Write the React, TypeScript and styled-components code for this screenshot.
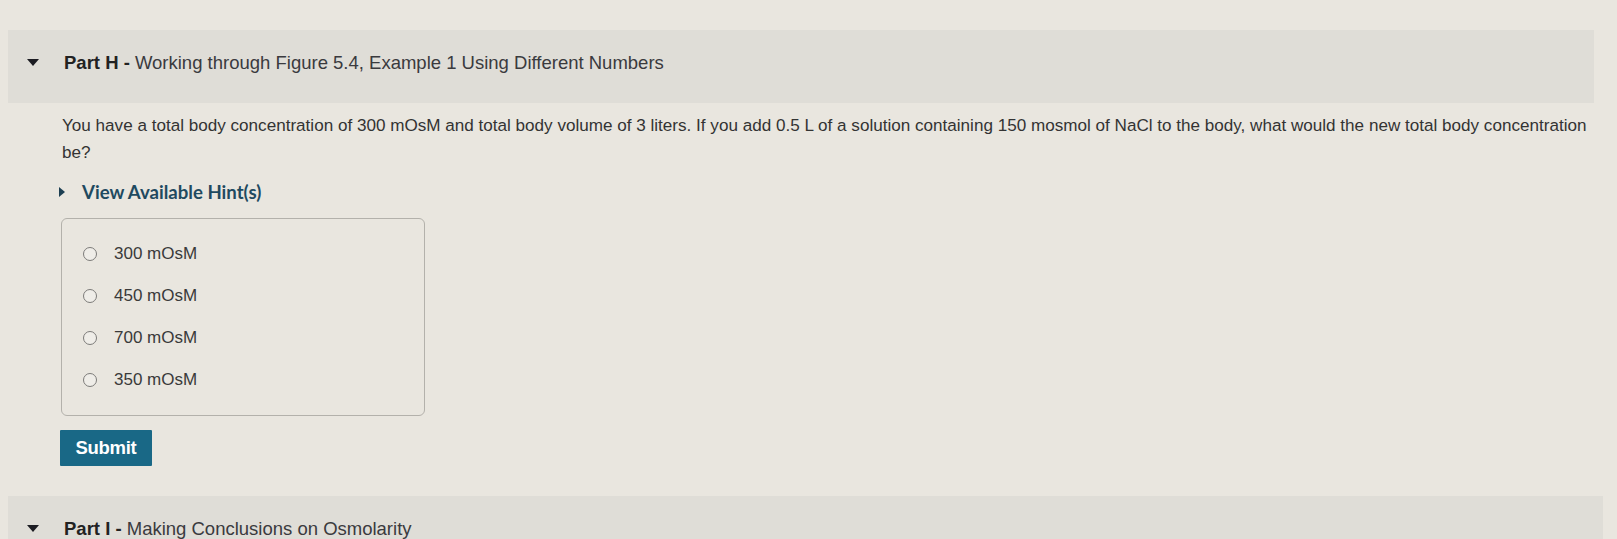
import { createGlobalStyle, styled } from 'styled-components';

const GlobalStyle = createGlobalStyle`
  html, body {
    margin: 0;
    padding: 0;
    background: #e9e6df;
  }
  body {
    font-family: 'Liberation Sans', Arial, sans-serif;
    color: #333;
  }
`;

const OPTIONS = ['300 mOsM', '450 mOsM', '700 mOsM', '350 mOsM'];

const App = () => {
  return (
    <>
      <GlobalStyle />
      <Page>
        <PartHeader>
          <DownCaret />
          <PartTitle>
            <b>Part H - </b>Working through Figure 5.4, Example 1 Using Different Numbers
          </PartTitle>
        </PartHeader>
        <PartBody>
          <Question>
            You have a total body concentration of 300 mOsM and total body volume of 3 liters. If you add 0.5 L of a
            solution containing 150 mosmol of NaCl to the body, what would the new total body concentration be?
          </Question>
          <HintToggle>
            <RightCaret />
            <HintText>View Available Hint(s)</HintText>
          </HintToggle>
          <OptionBox>
            {OPTIONS.map((option) => (
              <OptionRow key={option}>
                <Radio />
                <OptionLabel>{option}</OptionLabel>
              </OptionRow>
            ))}
          </OptionBox>
          <SubmitButton>Submit</SubmitButton>
        </PartBody>
        <PartHeader $next>
          <DownCaret />
          <PartTitle>
            <b>Part I - </b>Making Conclusions on Osmolarity
          </PartTitle>
        </PartHeader>
      </Page>
    </>
  );
};

export default App;

const Page = styled.div`
  display: flex;
  flex-direction: column;
  padding: 30px 23px 0 8px;
  height: 539px;
  box-sizing: border-box;
  overflow: hidden;
`;

const PartHeader = styled.div<{ $next?: boolean }>`
  display: flex;
  align-items: center;
  flex-shrink: 0;
  height: 73px;
  padding: 0 0 8px 19px;
  box-sizing: border-box;
  background: #dfddd7;
  margin-top: ${(p) => (p.$next ? '30px' : '0')};
  margin-right: ${(p) => (p.$next ? '-9px' : '0')};
`;

const DownCaret = styled.span`
  width: 0;
  height: 0;
  border-left: 6px solid transparent;
  border-right: 6px solid transparent;
  border-top: 7px solid #1c1c22;
  margin-right: 25px;
`;

const PartTitle = styled.div`
  font-size: 18.5px;
  color: #3a3a3e;
  b {
    color: #222;
  }
`;

const PartBody = styled.div`
  display: flex;
  flex-direction: column;
  align-items: flex-start;
  padding-left: 53px;
  padding-right: 6px;
`;

const Question = styled.p`
  margin: 9px 0 0 1px;
  font-size: 17.1px;
  line-height: 27px;
  color: #333;
`;

const HintToggle = styled.div`
  display: flex;
  align-items: center;
  margin: 13px 0 0 -2px;
  height: 26px;
`;

const RightCaret = styled.span`
  width: 0;
  height: 0;
  border-top: 5.5px solid transparent;
  border-bottom: 5.5px solid transparent;
  border-left: 6px solid #1d3f52;
  margin-right: 17px;
`;

const HintText = styled.span`
  font-family: Lato, 'Liberation Sans', sans-serif;
  font-weight: 700;
  font-size: 18.6px;
  color: #1f4a60;
`;

const OptionBox = styled.div`
  display: flex;
  flex-direction: column;
  width: 364px;
  height: 198px;
  box-sizing: border-box;
  margin-top: 13px;
  padding: 14px 0 0 21px;
  border: 1.5px solid #b3b1ab;
  border-radius: 6px;
`;

const OptionRow = styled.label`
  display: flex;
  align-items: center;
  height: 42px;
`;

const Radio = styled.span`
  width: 14px;
  height: 14px;
  box-sizing: border-box;
  border: 1.5px solid #7c7b79;
  border-radius: 50%;
  background: #efede8;
  margin-right: 17px;
`;

const OptionLabel = styled.span`
  font-size: 17px;
  color: #3a3a3a;
`;

const SubmitButton = styled.button`
  margin-top: 14px;
  margin-left: -1px;
  width: 92px;
  height: 36px;
  border: none;
  border-radius: 1px;
  background: #196886;
  color: #fff;
  font-family: 'Liberation Sans', Arial, sans-serif;
  font-weight: 700;
  font-size: 18.5px;
  letter-spacing: -0.3px;
  cursor: pointer;
`;
